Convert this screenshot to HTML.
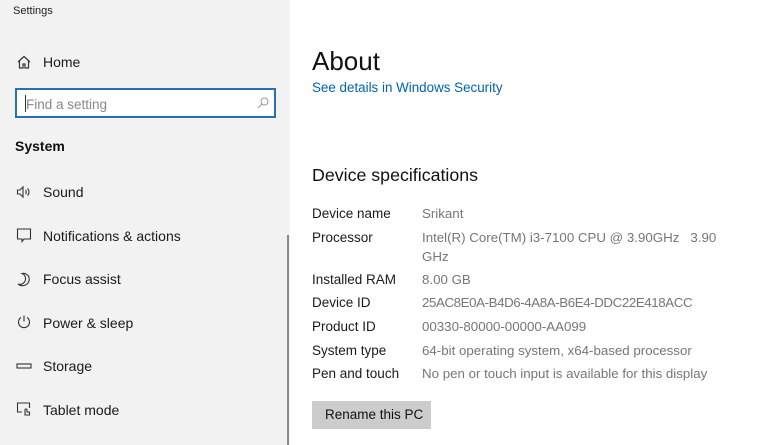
<!DOCTYPE html><html><head><style>
body{margin:0;width:768px;height:445px;overflow:hidden;background:#fff;font-family:"Liberation Sans",sans-serif;position:relative}
.a{position:absolute;white-space:nowrap}
#side{position:absolute;left:0;top:0;width:290px;height:445px;background:#f2f2f2}
.it{font-size:14px;color:#1a1a1a;left:43px}
.ic{position:absolute;left:16px}
.l{left:312px;font-size:13.5px;color:#1a1a1a}
.v{left:422px;font-size:13.3px;color:#767676}
</style></head><body>
<div id="side">
<div class="a" style="left:13px;top:5px;font-size:11px;color:#222">Settings</div>
<svg class="ic" style="top:54px" width="16" height="16" viewBox="0 0 16 16" fill="none" stroke="#333" stroke-width="1.2"><path d="M2 8L8 2.5L14 8M3.5 7v7h3.5v-4h2v4h3.5V7"/></svg>
<div class="a it" style="top:54px">Home</div>
<div class="a" style="left:15px;top:88px;width:257px;height:26px;border:2px solid #2a6fb0;background:#fff"></div>
<div class="a" style="left:26px;top:97px;font-size:13.5px;color:#888">Find a setting</div>
<div class="a" style="left:25px;top:95px;width:1px;height:17px;background:#333"></div>
<svg class="a" style="left:256px;top:96px" width="14" height="14" viewBox="0 0 14 14" fill="none" stroke="#999" stroke-width="1"><circle cx="8.5" cy="5.5" r="3.5"/><path d="M6 8L2 12"/></svg>
<div class="a" style="left:15px;top:138px;font-size:14px;font-weight:bold;color:#111">System</div>
<svg class="ic" style="top:184px" width="16" height="16" viewBox="0 0 16 16" fill="none" stroke="#333" stroke-width="1.1"><path d="M1.5 6h2.5l3-3v10l-3-3H1.5z M9.5 6c1 1 1 3 0 4 M11.5 4.5c2 2 2 5 0 7"/></svg>
<div class="a it" style="top:184px">Sound</div>
<svg class="ic" style="top:227px" width="16" height="16" viewBox="0 0 16 16" fill="none" stroke="#333" stroke-width="1.1"><path d="M1.5 2h13v10H8l-2 2.5V12H1.5z"/></svg>
<div class="a it" style="top:228px">Notifications &amp; actions</div>
<svg class="ic" style="top:271px" width="16" height="16" viewBox="0 0 16 16" fill="none" stroke="#333" stroke-width="1.1"><path d="M6 2.5c4 1.5 5 7 1 10c-1.5 1-3.5 1-5 0.5c2 2 6 2.5 9 0c2.5-2 3-6 1-8.5c-1.5-1.5-4-2.5-6-2z"/></svg>
<div class="a it" style="top:271px">Focus assist</div>
<svg class="ic" style="top:314px" width="16" height="16" viewBox="0 0 16 16" fill="none" stroke="#333" stroke-width="1.1"><path d="M5 3.5a5.5 5.5 0 1 0 6 0M8 1.5v6"/></svg>
<div class="a it" style="top:315px">Power &amp; sleep</div>
<svg class="ic" style="top:358px" width="16" height="16" viewBox="0 0 16 16" fill="none" stroke="#333" stroke-width="1.1"><rect x="1" y="6" width="14" height="4"/></svg>
<div class="a it" style="top:358px">Storage</div>
<svg class="ic" style="top:401px" width="16" height="16" viewBox="0 0 16 16" fill="none" stroke="#333" stroke-width="1.1"><path d="M6 11H1.5V2h12v5M9 14v-5a1 1 0 0 1 2 0v2h2.5v3z"/></svg>
<div class="a it" style="top:402px">Tablet mode</div>
<div class="a" style="left:287px;top:235px;width:2px;height:210px;background:#8a8a8a"></div>
</div>
<div class="a" style="left:312px;top:46px;font-size:26px;color:#111">About</div>
<div class="a" style="left:312px;top:80px;font-size:13.4px;color:#0063b1">See details in Windows Security</div>
<div class="a" style="left:312px;top:165px;font-size:17.8px;color:#111">Device specifications</div>
<div class="a l" style="top:206px">Device name</div><div class="a v" style="top:206px">Srikant</div>
<div class="a l" style="top:230px">Processor</div><div class="a v" style="top:230px">Intel(R) Core(TM) i3-7100 CPU @ 3.90GHz &nbsp; 3.90</div>
<div class="a v" style="top:249px">GHz</div>
<div class="a l" style="top:272px">Installed RAM</div><div class="a v" style="top:272px">8.00 GB</div>
<div class="a l" style="top:295px">Device ID</div><div class="a v" style="top:295px;letter-spacing:-0.4px">25AC8E0A-B4D6-4A8A-B6E4-DDC22E418ACC</div>
<div class="a l" style="top:319px">Product ID</div><div class="a v" style="top:319px">00330-80000-00000-AA099</div>
<div class="a l" style="top:343px">System type</div><div class="a v" style="top:343px">64-bit operating system, x64-based processor</div>
<div class="a l" style="top:366px">Pen and touch</div><div class="a v" style="top:366px">No pen or touch input is available for this display</div>
<div class="a" style="left:312px;top:401px;width:119px;height:28px;background:#cccccc"></div>
<div class="a" style="left:325px;top:407px;font-size:13.5px;color:#111">Rename this PC</div>
</body></html>
